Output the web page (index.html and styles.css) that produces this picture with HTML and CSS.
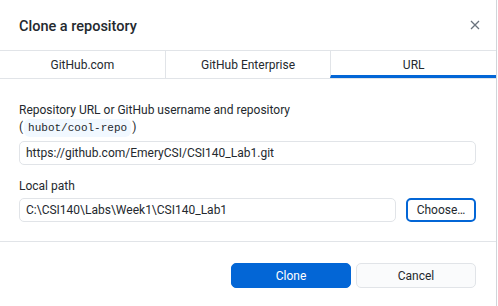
FILE: index.html
```html
<!DOCTYPE html>
<html lang="en">
<head>
  <meta charset="UTF-8" />
  <title>Clone a repository</title>
  <link rel="stylesheet" href="styles.css">
</head>
<body>
  <div class="dialog">
    <header class="dialog-header">
      <h1>Clone a repository</h1>
      <button class="close" aria-label="Close">
        <svg width="10" height="10" viewBox="0 0 10 10"><path d="M1 1L9 9M9 1L1 9" stroke="#6a737d" stroke-width="1.3" fill="none"/></svg>
      </button>
    </header>

    <nav class="tabs">
      <div class="tab">GitHub.com</div>
      <div class="tab">GitHub Enterprise</div>
      <div class="tab active">URL</div>
    </nav>

    <div class="content">
      <label class="field-label">Repository URL or GitHub username and repository<br>(<code>hubot/cool-repo</code>)</label>
      <input class="text-input" type="text" value="https://github.com/EmeryCSI/CSI140_Lab1.git">

      <label class="field-label path-label">Local path</label>
      <div class="path-row">
        <input class="text-input" type="text" value="C:\CSI140\Labs\Week1\CSI140_Lab1">
        <button class="btn choose">Choose…</button>
      </div>
    </div>

    <footer class="dialog-footer">
      <button class="btn primary">Clone</button>
      <button class="btn">Cancel</button>
    </footer>
  </div>
</body>
</html>
```

FILE: styles.css
```css
body {
  margin: 0;
  background: #fff;
  font-family: Roboto, "Noto Sans", sans-serif;
  color: #24292e;
}
.dialog {
  width: 496px;
  height: 306px;
  border-right: 1px solid #d1d5da;
  display: flex;
  flex-direction: column;
}
.dialog-header {
  height: 50px;
  display: flex;
  align-items: center;
  justify-content: space-between;
  padding: 0 14px 0 19px;
  border-bottom: 1px solid #e1e4e8;
}
.dialog-header h1 {
  margin: 0;
  font-size: 14.5px;
  font-weight: 500;
  color: #24292e;
  padding-top: 2px;
}
.close {
  border: none;
  background: none;
  padding: 0;
  width: 14px;
  height: 14px;
  display: flex;
  align-items: center;
  justify-content: center;
}
.tabs {
  display: flex;
  height: 27px;
  border-bottom: 1px solid #e1e4e8;
}
.tab {
  flex: 1;
  display: flex;
  align-items: center;
  justify-content: center;
  font-size: 12px;
  color: #24292e;
  box-sizing: border-box;
}
.tab + .tab {
  border-left: 1px solid #e1e4e8;
}
.tab.active {
  border-bottom: 3px solid #0366d6;
  padding-top: 3px;
}
.content {
  padding: 23px 20px 0 19px;
  display: flex;
  flex-direction: column;
}
.field-label {
  font-size: 12px;
  line-height: 17px;
}
code {
  font-family: "Liberation Mono", monospace;
  font-size: 11px;
  background: #f1f8ff;
  border-radius: 6px;
  padding: 3px 4px;
  margin: 0 1px;
}
.text-input {
  box-sizing: border-box;
  height: 24px;
  margin-top: 4px;
  border: 1px solid #e1e4e8;
  border-radius: 5px;
  padding: 0 6px;
  font-family: inherit;
  font-size: 12px;
  color: #24292e;
  outline: none;
}
.path-label {
  margin-top: 13px;
  line-height: 16px;
}
.path-row {
  display: flex;
  gap: 10px;
  align-items: flex-start;
}
.path-row .text-input {
  flex: 1;
}
.btn {
  box-sizing: border-box;
  height: 25px;
  border: 1px solid #e1e4e8;
  border-radius: 5px;
  background: #fafbfc;
  font-family: inherit;
  font-size: 12px;
  color: #24292e;
  width: 120px;
}
.btn.choose {
  width: 70px;
  margin-top: 4px;
  height: 24px;
  background: #fff;
  border: 2px solid #0366d6;
}
.btn.primary {
  background: #0366d6;
  border-color: #0366d6;
  color: #fff;
}
.dialog-footer {
  margin-top: 19px;
  border-top: 1px solid #e1e4e8;
  padding: 21px 20px 0 0;
  display: flex;
  justify-content: flex-end;
  gap: 5px;
}
```
